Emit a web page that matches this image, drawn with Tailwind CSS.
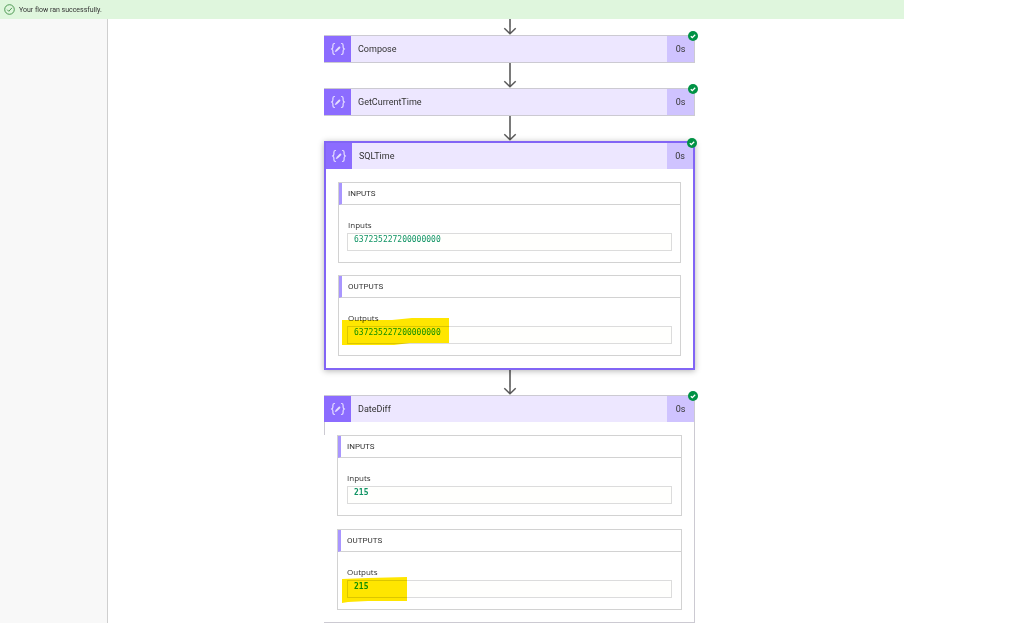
<!DOCTYPE html>
<html lang="en">
<head>
<meta charset="utf-8">
<title>Flow run</title>
<script src="https://cdn.jsdelivr.net/npm/@tailwindcss/browser@4"></script>
</head>
<body class="bg-white font-[Roboto,'Open_Sans',sans-serif] text-[#333333]">
<svg class="hidden" aria-hidden="true">
  <symbol id="braces" viewBox="0 0 16 14">
    <g fill="none" stroke="#e6deff" stroke-linecap="round" stroke-linejoin="round">
      <path d="M4.500 1.500C3.200 1.500 2.900 2.100 2.900 3.200v1.900c0 1-.4 1.700-1.500 1.900 1.100.2 1.500.9 1.500 1.900v1.900c0 1.100.3 1.700 1.600 1.700" stroke-width="1.200"/>
      <path d="M11.500 1.500c1.300 0 1.600.6 1.600 1.700v1.900c0 1 .4 1.700 1.500 1.900-1.100.2-1.500.9-1.500 1.900v1.900c0 1.100-.3 1.700-1.600 1.700" stroke-width="1.200"/>
      <path d="M6.300 8.600l3.100-3.100" stroke-width="1.900"/>
      <path d="M5.300 9.600l1-1" stroke-width="1"/>
    </g>
  </symbol>
  <symbol id="ok" viewBox="0 0 10 10">
    <circle cx="5" cy="5" r="5" fill="#009245"/>
    <path d="M2.800 5.200l1.500 1.400 2.900-2.900" fill="none" stroke="#fff" stroke-width="1.300"/>
  </symbol>
  <symbol id="head" viewBox="0 0 14 8">
    <path d="M7 0v7M1.300 1.200L7 6.800l5.700-5.600" fill="none" stroke="#595959" stroke-width="1.500"/>
  </symbol>
</svg>

<div class="mr-[119px] flex min-h-screen flex-col">
  <div role="status" class="flex h-[19px] items-center gap-1 bg-[#dff6dd] pl-1 text-[7px] leading-3">
    <svg class="size-[11px]" viewBox="0 0 11 11" fill="none" stroke="#3f8f45" stroke-width=".9"><circle cx="5.500" cy="5.500" r="4.800"/><path d="M3.200 5.700l1.600 1.600 3.200-3.500"/></svg>
    <span>Your flow ran successfully.</span>
  </div>

  <div class="flex flex-1">
    <aside class="w-[108px] shrink-0 border-r border-[#cfcfcf] bg-[#f8f8f8]"></aside>
    <main class="flex flex-1 flex-col items-center pl-[7px]">

      <div class="flex h-4 flex-col items-center"><span class="w-[2px] flex-1 bg-[#7a7a7a]"></span><svg class="h-2 w-[14px]"><use href="#head"/></svg></div>

      <section class="relative w-full max-w-[371px]">
        <button class="flex h-7 w-full items-stretch border-y border-r border-[#cccad2] bg-[#ede7ff] text-left text-[9px] leading-[14px]">
          <span class="flex w-[27px] items-center justify-center bg-[#8c6cff]"><svg class="h-[14px] w-4"><use href="#braces"/></svg></span>
          <span class="flex-1 self-center pl-[7px]">Compose</span>
          <span class="flex w-[27px] items-center justify-center bg-[#cfc3ff]">0s</span>
        </button>
        <svg class="absolute -top-1 -right-[3px] size-[10px]"><use href="#ok"/></svg>
      </section>

      <div class="flex h-[25px] flex-col items-center"><span class="w-[2px] flex-1 bg-[#7a7a7a]"></span><svg class="h-2 w-[14px]"><use href="#head"/></svg></div>

      <section class="relative w-full max-w-[371px]">
        <button class="flex h-7 w-full items-stretch border-y border-r border-[#cccad2] bg-[#ede7ff] text-left text-[9px] leading-[14px]">
          <span class="flex w-[27px] items-center justify-center bg-[#8c6cff]"><svg class="h-[14px] w-4"><use href="#braces"/></svg></span>
          <span class="flex-1 self-center pl-[7px]">GetCurrentTime</span>
          <span class="flex w-[27px] items-center justify-center bg-[#cfc3ff]">0s</span>
        </button>
        <svg class="absolute -top-1 -right-[3px] size-[10px]"><use href="#ok"/></svg>
      </section>

      <div class="flex h-[25px] flex-col items-center"><span class="w-[2px] flex-1 bg-[#7a7a7a]"></span><svg class="h-2 w-[14px]"><use href="#head"/></svg></div>

      <section class="relative w-full max-w-[371px] border-2 border-[#8265f5] bg-white shadow-[0_1px_6px_rgba(0,0,0,0.3)]">
        <button class="flex h-[26px] w-full items-stretch bg-[#ede7ff] text-left text-[9px] leading-[14px]">
          <span class="flex w-[26px] items-center justify-center bg-[#8c6cff]"><svg class="h-[14px] w-4"><use href="#braces"/></svg></span>
          <span class="flex-1 self-center pl-[7px]">SQLTime</span>
          <span class="flex w-[26px] items-center justify-center bg-[#cfc3ff]">0s</span>
        </button>
        <svg class="absolute -top-[5px] -right-1 size-[10px]"><use href="#ok"/></svg>
        <div class="flex flex-col gap-3 px-3 pt-[13px] pb-3">
          <div class="border border-[#d2d2d2] pb-[11px]">
            <h3 class="flex h-[22px] items-center border-b border-l-3 border-b-[#d2d2d2] border-l-[#a996ff] pl-[6px] text-[8px]">INPUTS</h3>
            <div class="flex flex-col px-2 pt-[14px]">
              <label for="a" class="mb-[2px] pl-px font-['Open_Sans',sans-serif] text-[8px] leading-3">Inputs</label>
              <input id="a" readonly value="637235227200000000" class="h-[18px] border border-[#dcdcdc] bg-[#fffffd] pb-[5px] pl-[6px] font-['DejaVu_Sans_Mono',monospace] text-[8px] leading-[10px] text-[#109464]">
            </div>
          </div>
          <div class="border border-[#d2d2d2] pb-[11px]">
            <h3 class="flex h-[22px] items-center border-b border-l-3 border-b-[#d2d2d2] border-l-[#a996ff] pl-[6px] text-[8px]">OUTPUTS</h3>
            <div class="relative flex flex-col px-2 pt-[14px]">
              <label for="b" class="mb-[2px] pl-px font-['Open_Sans',sans-serif] text-[8px] leading-3">Outputs</label>
              <input id="b" readonly value="637235227200000000" class="h-[18px] border border-[#dcdcdc] bg-[#fffffd] pb-[5px] pl-[6px] font-['DejaVu_Sans_Mono',monospace] text-[8px] leading-[10px] text-[#109f64]">
              <svg class="pointer-events-none absolute top-5 left-[3px] h-[27px] w-[107px] mix-blend-multiply" viewBox="0 0 107 27"><path d="M0 2h50l20-2h37v25H68l-16 2H0z" fill="#ffe600"/></svg>
            </div>
          </div>
        </div>
      </section>

      <div class="flex h-[25px] flex-col items-center"><span class="w-[2px] flex-1 bg-[#7a7a7a]"></span><svg class="h-2 w-[14px]"><use href="#head"/></svg></div>

      <section class="relative w-full max-w-[371px] border-y border-r border-[#cccad2]">
        <button class="flex h-[26px] w-full items-stretch bg-[#ede7ff] text-left text-[9px] leading-[14px]">
          <span class="flex w-[27px] items-center justify-center bg-[#8c6cff]"><svg class="h-[14px] w-4"><use href="#braces"/></svg></span>
          <span class="flex-1 self-center pl-[7px]">DateDiff</span>
          <span class="flex w-[27px] items-center justify-center bg-[#cfc3ff]">0s</span>
        </button>
        <svg class="absolute -top-[5px] -right-[4px] size-[10px]"><use href="#ok"/></svg>
        <div class="h-[13px] border-l border-[#cccad2]"></div>
        <div class="flex flex-col gap-[13px] pr-3 pb-3 pl-[13px]">
          <div class="border border-[#d2d2d2] pb-[11px]">
            <h3 class="flex h-[22px] items-center border-b border-l-3 border-b-[#d2d2d2] border-l-[#a996ff] pl-[6px] text-[8px]">INPUTS</h3>
            <div class="flex flex-col px-[9px] pt-[14px]">
              <label for="c" class="mb-[2px] font-['Open_Sans',sans-serif] text-[8px] leading-3">Inputs</label>
              <input id="c" readonly value="215" class="h-[18px] border border-[#dcdcdc] bg-[#fffffd] pb-[5px] pl-[6px] font-['DejaVu_Sans_Mono',monospace] text-[8px] leading-[10px] font-bold text-[#109464]">
            </div>
          </div>
          <div class="border border-[#d2d2d2] pb-[11px]">
            <h3 class="flex h-[22px] items-center border-b border-l-3 border-b-[#d2d2d2] border-l-[#a996ff] pl-[6px] text-[8px]">OUTPUTS</h3>
            <div class="relative flex flex-col px-[9px] pt-[14px]">
              <label for="d" class="mb-[2px] font-['Open_Sans',sans-serif] text-[8px] leading-3">Outputs</label>
              <input id="d" readonly value="215" class="h-[18px] border border-[#dcdcdc] bg-[#fffffd] pb-[5px] pl-[6px] font-['DejaVu_Sans_Mono',monospace] text-[8px] leading-[10px] font-bold text-[#109f64]">
              <svg class="pointer-events-none absolute top-[25px] left-1 h-[27px] w-[66px] mix-blend-multiply" viewBox="0 0 66 27"><path d="M0 2l26-1 39-1v24H26L6 25l-6 1z" fill="#ffe600"/></svg>
            </div>
          </div>
        </div>
      </section>
    </main>
  </div>
</div>
</body>
</html>
